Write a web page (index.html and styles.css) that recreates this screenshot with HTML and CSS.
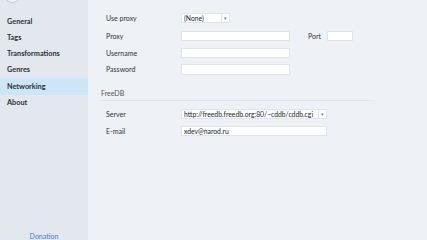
FILE: index.html
```html
<!DOCTYPE html>
<html>
<head>
<meta charset="utf-8">
<link rel="stylesheet" href="styles.css">
</head>
<body>
<div class="app">
  <aside class="sidebar">
    <div class="top"><div class="avatar"></div></div>
    <nav class="nav">
      <div class="item">General</div>
      <div class="item">Tags</div>
      <div class="item">Transformations</div>
      <div class="item">Genres</div>
      <div class="item active">Networking</div>
      <div class="item">About</div>
    </nav>
    <div class="spacer"></div>
    <a class="donation">Donation</a>
  </aside>
  <main class="main">
    <div class="form">
      <div class="row first">
        <span class="label">Use proxy</span>
        <div class="combo small"><span class="val">(None)</span><span class="arrow">▾</span></div>
      </div>
      <div class="row">
        <span class="label">Proxy</span>
        <div class="input proxy"></div>
        <span class="port-label">Port</span>
        <div class="input port"></div>
      </div>
      <div class="row">
        <span class="label">Username</span>
        <div class="input proxy"></div>
      </div>
      <div class="row">
        <span class="label">Password</span>
        <div class="input proxy"></div>
      </div>
    </div>
    <div class="section">FreeDB</div>
    <div class="form second">
      <div class="row">
        <span class="label">Server</span>
        <div class="combo wide"><span class="val">http://freedb.freedb.org:80/~cddb/cddb.cgi</span><span class="arrow">▾</span></div>
      </div>
      <div class="row">
        <span class="label">E-mail</span>
        <div class="input email"><span class="val">xdev@narod.ru</span></div>
      </div>
    </div>
  </main>
</div>
</body>
</html>
```
FILE: styles.css
```css
* { box-sizing: border-box; }
html, body { margin: 0; padding: 0; }
body {
  width: 427px;
  height: 240px;
  overflow: hidden;
  font-family: Lato, "Open Sans", sans-serif;
  font-size: 7px;
  color: #333;
  background: #eef1f6;
}
.app { display: flex; height: 240px; }
.sidebar {
  width: 88px;
  background: #e3e8ef;
  display: flex;
  flex-direction: column;
}
.top { height: 14px; display: flex; padding-left: 4px; overflow: hidden; }
.avatar {
  width: 17px; height: 17px;
  border: 1px solid #c3c9d2;
  border-radius: 50%;
  background: #f2f4f7;
  margin-top: -14px;
}
.nav { display: flex; flex-direction: column; }
.item {
  height: 16px;
  line-height: 16px;
  padding-left: 7px;
  font-weight: 700;
  font-size: 7.3px;
  color: #2b2f36;
}
.item.active { background: #cde6f7; height: 17px; line-height: 17px; }
.spacer { flex: 1; }
.donation {
  text-align: center;
  color: #3b7fd0;
  line-height: 8px;
  height: 8px;
}
.main { flex: 1; padding: 13px 0 0 13px; }
.form { display: flex; flex-direction: column; gap: 6.3px; padding-left: 5px; }
.row { display: flex; align-items: center; height: 10.3px; }
.row.first { margin-bottom: 1.5px; }
.label { width: 75px; }
.input, .combo {
  height: 10.3px;
  background: #fff;
  border: 1px solid #dfe3ea;
  display: flex;
  align-items: center;
}
.proxy { width: 109px; }
.port-label { margin-left: 18px; width: 19px; }
.port { width: 26px; }
.combo { padding-left: 2px; }
.val { flex: 1; font-size: 6.8px; white-space: nowrap; overflow: hidden; color: #222; }
.arrow {
  width: 8px;
  text-align: center;
  border-left: 1px solid #e2e5ea;
  font-size: 5px;
  color: #777;
  height: 100%;
  line-height: 8.5px;
}
.small { width: 49px; }
.wide { width: 146px; }
.email { width: 146px; padding-left: 2px; }
.section {
  margin-top: 14px;
  padding: 0 0 2px 0;
  border-bottom: 1px solid #e1e5eb;
  width: 274px;
  color: #555;
  line-height: 9px;
}
.second { margin-top: 8.5px; gap: 6.5px; }
```
